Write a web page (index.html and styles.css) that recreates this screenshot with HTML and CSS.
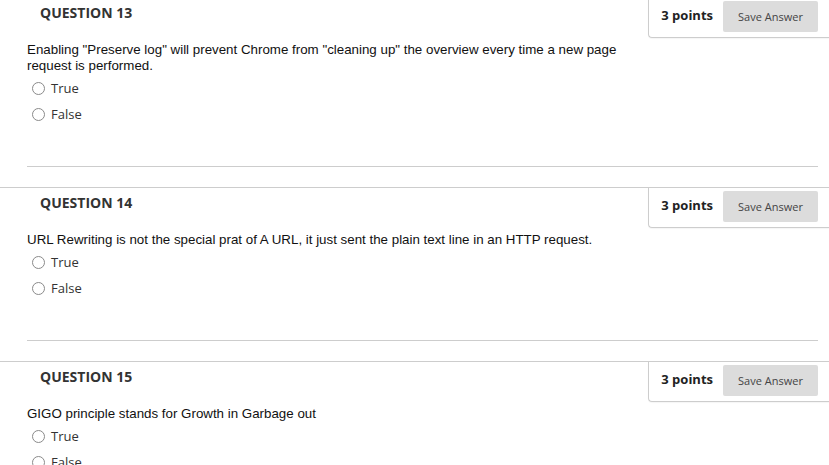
FILE: index.html
```html
<!DOCTYPE html>
<html>
<head>
  <meta charset="utf-8">
  <meta name="viewport" content="width=device-width, initial-scale=1">
  <title>Test</title>
  <link rel="stylesheet" href="styles.css">
</head>
<body>
  <div class="questions">
    <div class="question">
      <div class="question-head">
        <h3 class="question-title">QUESTION 13</h3>
        <div class="points">
          <span class="points-value">3 points</span>
          <button class="save-btn">Save Answer</button>
        </div>
      </div>
      <div class="question-body">
        <p class="question-text">Enabling "Preserve log" will prevent Chrome from "cleaning up" the overview every time a new page request is performed.</p>
        <label class="choice"><span class="radio"></span>True</label>
        <label class="choice"><span class="radio"></span>False</label>
      </div>
    </div>

    <div class="question">
      <div class="question-head">
        <h3 class="question-title">QUESTION 14</h3>
        <div class="points">
          <span class="points-value">3 points</span>
          <button class="save-btn">Save Answer</button>
        </div>
      </div>
      <div class="question-body">
        <p class="question-text">URL Rewriting is not the special prat of A URL, it just sent the plain text line in an HTTP request.</p>
        <label class="choice"><span class="radio"></span>True</label>
        <label class="choice"><span class="radio"></span>False</label>
      </div>
    </div>

    <div class="question">
      <div class="question-head">
        <h3 class="question-title">QUESTION 15</h3>
        <div class="points">
          <span class="points-value">3 points</span>
          <button class="save-btn">Save Answer</button>
        </div>
      </div>
      <div class="question-body">
        <p class="question-text">GIGO principle stands for Growth in Garbage out</p>
        <label class="choice"><span class="radio"></span>True</label>
        <label class="choice"><span class="radio"></span>False</label>
      </div>
    </div>
  </div>
</body>
</html>
```

FILE: styles.css
```css
html,
body {
  margin: 0;
  background: #fff;
  overflow: hidden;
}
.questions {
  margin-top: -3px;
}
.question {
  border-top: 1px solid #cdcdcd;
  padding-bottom: 20px;
}
.question-head {
  display: flex;
  justify-content: space-between;
  align-items: flex-start;
  height: 40px;
}
.question-title {
  margin: 5px 0 0 40px;
  font: 700 14px/20px "Open Sans", sans-serif;
  color: #333;
}
.points {
  display: flex;
  align-self: stretch;
  align-items: flex-start;
  gap: 10px;
  height: 39px;
  padding: 0 11px 0 12px;
  border-left: 1px solid #cdcdcd;
  border-bottom: 1px solid #cdcdcd;
  border-bottom-left-radius: 4px;
  box-shadow: 0 1px 1px rgba(0, 0, 0, 0.04);
}
.points-value {
  margin-top: 2px;
  font: 700 13px/31px "Open Sans", sans-serif;
  color: #222;
}
.save-btn {
  margin-top: 3px;
  width: 95px;
  height: 31px;
  padding: 0;
  border: 0;
  border-radius: 2px;
  background: #dcdcdc;
  font: 400 11px "Open Sans", sans-serif;
  color: #444;
}
.question-body {
  margin: 4px 11px 0 27px;
  padding-bottom: 39px;
  border-bottom: 1px solid #cdcdcd;
}
.question-text {
  margin: 0 0 1px;
  max-width: 610px;
  font: 13.33px/16px "Liberation Sans", Arial, sans-serif;
  color: #111;
}
.choice {
  display: flex;
  align-items: center;
  gap: 6px;
  height: 26px;
  padding-left: 5px;
  font: 13px/16px "Open Sans", sans-serif;
  color: #333;
}
.radio {
  width: 13px;
  height: 13px;
  box-sizing: border-box;
  border: 1px solid #8a8a8a;
  border-radius: 50%;
  background: #fff;
}
```
